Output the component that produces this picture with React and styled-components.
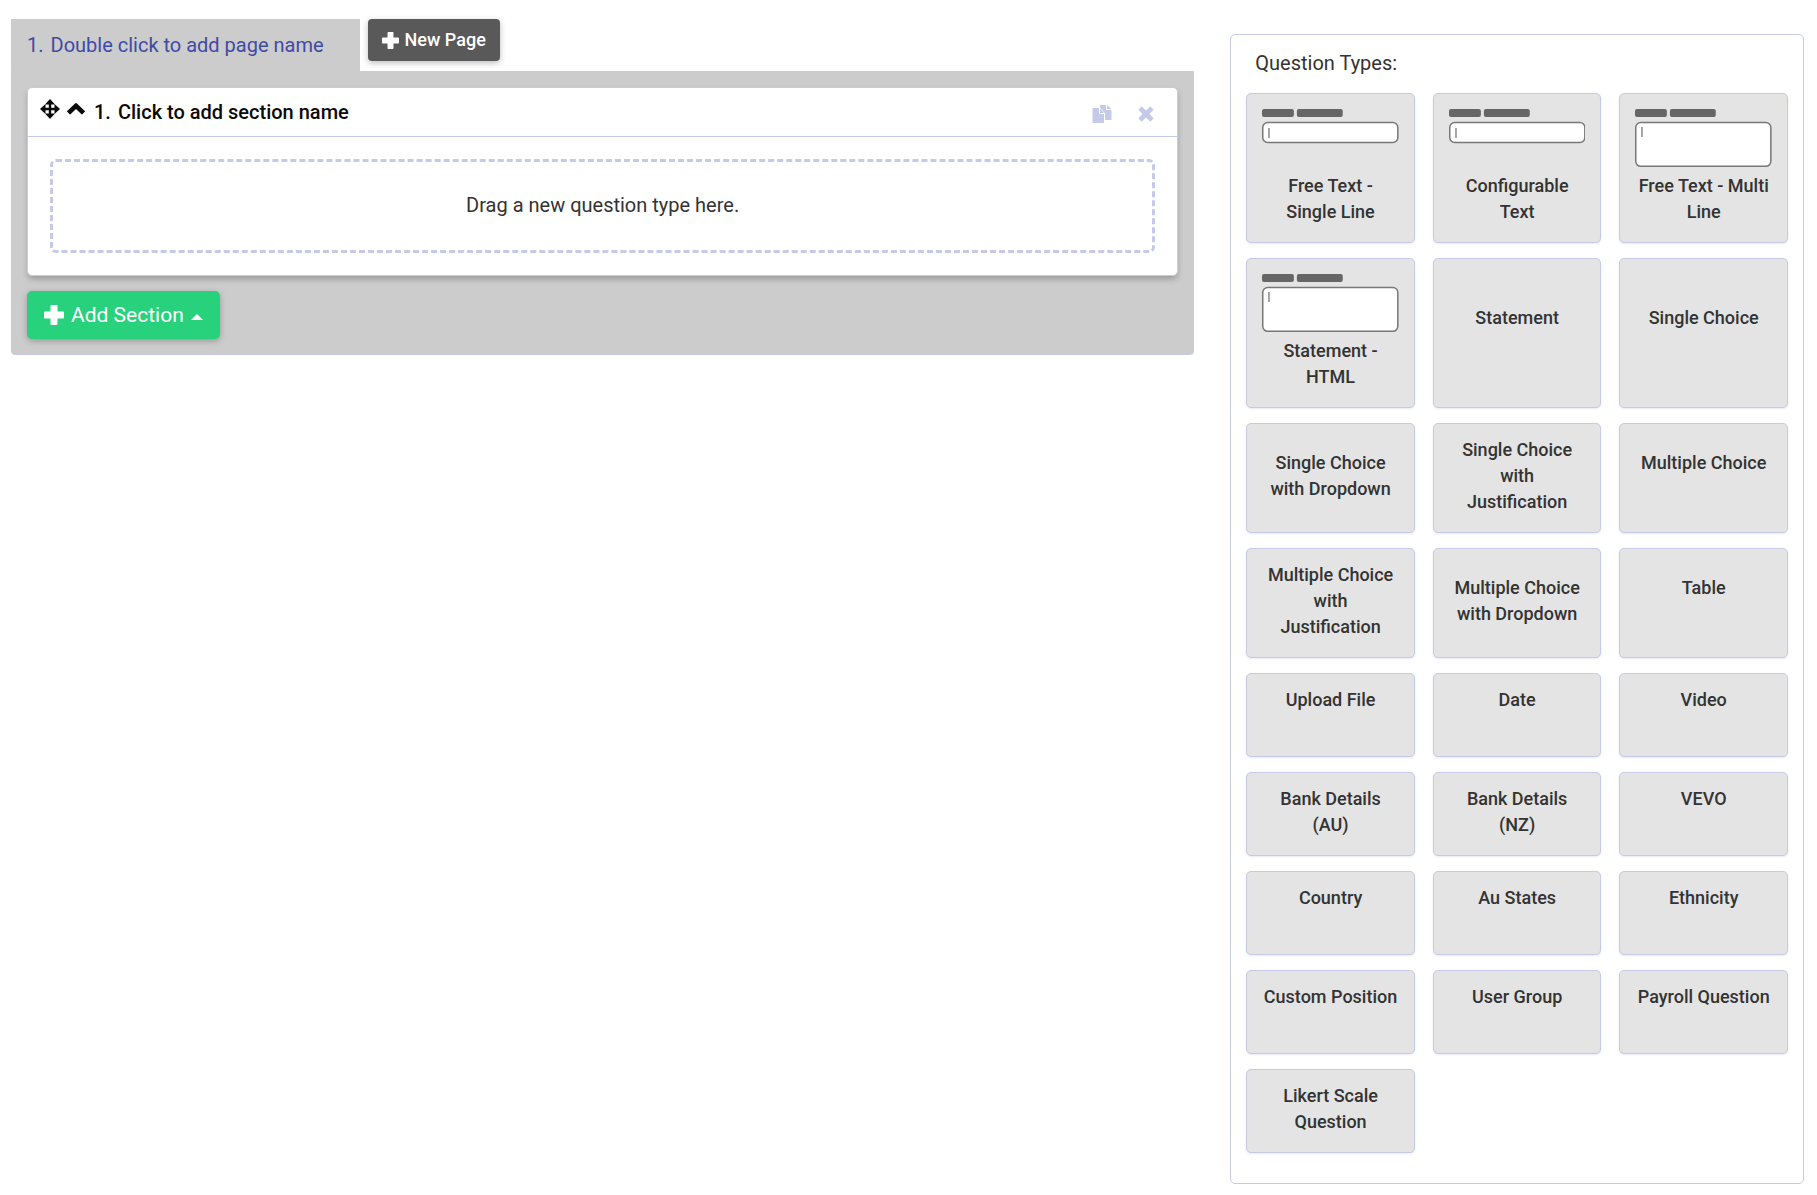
import React from "react";
import styled, { createGlobalStyle } from "styled-components";

const GlobalStyle = createGlobalStyle`
  *, *::before, *::after { box-sizing: border-box; }
  body {
    margin: 0;
    background: #fff;
    color: #333;
    font-family: Roboto, "Liberation Sans", sans-serif;
    font-size: 20px;
    font-weight: 400;
    line-height: 28px;
  }
  button { font: inherit; color: inherit; cursor: pointer; }
`;

const Page = styled.div`
  display: grid;
  grid-template-columns: 33fr 16fr;
  gap: 36px;
  align-items: start;
  padding: 19px 13px 10px 11px;
`;

const TabBar = styled.nav`
  display: flex;
  align-items: flex-start;
  gap: 8px;
`;

const TabSlot = styled.div`
  background: #ccc;
  padding-right: 2px;
`;

const Tab = styled.a`
  display: flex;
  gap: 7px;
  height: 52px;
  padding: 11px 33px 12px 15px;
  border: 1px solid #c5cae9;
  border-bottom: 0;
  border-top-right-radius: 4px;
  color: #3f4ba5;
  text-decoration: none;
  white-space: nowrap;
`;

const SolidButton = styled.button`
  display: inline-flex;
  align-items: center;
  gap: ${(p) => (p.$large ? "7px" : "6px")};
  height: ${(p) => (p.$large ? "48px" : "42px")};
  padding: 0 ${(p) => (p.$large ? "17px" : "14px")};
  border: 0;
  border-radius: ${(p) => (p.$large ? "5px" : "4px")};
  background: ${(p) => (p.$large ? "#28d17c" : "#595959")};
  color: #fff;
  font-size: ${(p) => (p.$large ? "21px" : "18px")};
  font-weight: ${(p) => (p.$large ? 400 : 500)};
  white-space: nowrap;
  box-shadow: 0 2px 6px rgba(0, 0, 0, 0.26);
`;

const Workspace = styled.div`
  padding: 15px;
  border: 1px solid #c5cae9;
  border-radius: 0 0 4px 4px;
  background: #ccc;
`;

const Section = styled.section`
  margin-bottom: 15px;
  border: 1px solid #c5cae9;
  border-radius: 5px;
  background: #fff;
  box-shadow: 0 4px 6px -1px rgba(0, 0, 0, 0.25);
`;

const SectionHeader = styled.header`
  display: flex;
  align-items: center;
  height: 49px;
  padding: 0 23px 0 12px;
  border-bottom: 1px solid #c5cae9;
  color: #0a0a0a;
`;

const SectionTitle = styled.h2`
  display: flex;
  flex: 1;
  gap: 7px;
  margin: 0 0 0 9px;
  font-size: 20px;
  font-weight: 500;
`;

const PlainButton = styled.button`
  display: flex;
  padding: 0;
  border: 0;
  background: none;
`;

const Tools = styled.div`
  display: flex;
  align-items: center;
  gap: ${(p) => (p.$wide ? "26px" : "7px")};
  padding: ${(p) => (p.$wide ? "3px 0 0" : "0 0 6px")};
  color: ${(p) => (p.$wide ? "#c5cae9" : "inherit")};
`;

const DropZone = styled.div`
  display: flex;
  align-items: center;
  justify-content: center;
  height: 94px;
  margin: 22px;
  padding-bottom: 2px;
  border: 3px dashed #c5cae9;
  border-radius: 6px;
`;

const Sidebar = styled.aside`
  margin-top: 15px;
  padding: 14px 15px 30px;
  border: 1px solid #c5cae9;
  border-radius: 5px;
`;

const SidebarTitle = styled.h3`
  margin: 0 9px 16px;
  font-size: 20px;
  font-weight: 400;
`;

const TypeGrid = styled.ul`
  display: grid;
  grid-template-columns: repeat(3, 1fr);
  gap: 15px 18px;
  margin: 0;
  padding: 0;
  list-style: none;
`;

const TypeItem = styled.li`
  display: flex;
`;

const TypeCard = styled.button`
  display: flex;
  flex: 1;
  flex-direction: column;
  align-items: stretch;
  justify-content: center;
  min-width: 0;
  padding: 13px 15px 17px;
  border: 1px solid #c5cae9;
  border-radius: 5px;
  background: #e4e4e4;
  font-size: 18px;
  font-weight: 500;
  line-height: 26px;
  text-align: center;
  box-shadow: 0 1px 2px rgba(197, 202, 233, 0.4);
`;

const TypeLabel = styled.span`
  min-height: 52px;
`;

const Preview = styled.svg`
  display: block;
  width: 100%;
  height: 64px;
  margin-top: 2px;
`;

const Plus = ({ size }) => (
  <svg width={size} height={size} viewBox="0 0 20 20" aria-hidden="true">
    <path fill="currentColor" d="M7.4 0h5.2q.9 0 .9.9v5.6h5.6q.9 0 .9.9v5.2q0 .9-.9.9h-5.6v5.6q0 .9-.9.9H7.4q-.9 0-.9-.9v-5.6H.9q-.9 0-.9-.9V7.4q0-.9.9-.9h5.6V.9q0-.9.9-.9z" />
  </svg>
);

const MoveIcon = () => (
  <svg width="20" height="20" viewBox="0 0 20 20" aria-hidden="true">
    <path fill="currentColor" d="M10 0l5 5.500h-3.800v3.300h3.300V5L20 10l-5.500 5v-3.800h-3.300v3.300H15L10 20l-5-5.500h3.800v-3.300H5.500V15L0 10l5.500-5v3.800h3.300V5.500H5z" />
  </svg>
);

const ChevronIcon = () => (
  <svg width="18" height="20" viewBox="0 0 18 20" aria-hidden="true">
    <path fill="currentColor" d="M8.300 4.300q.7-.6 1.400 0L17.800 12q.4.400 0 .8l-2.500 2.400q-.4.4-.8 0L9 10l-5.500 5.200q-.4.4-.8 0L.2 12.800q-.4-.4 0-.8z" />
  </svg>
);

const CopyIcon = () => (
  <svg width="20" height="20" viewBox="0 0 20 20" aria-hidden="true">
    <path fill="currentColor" d="M8 1h6v5h5.500v10h-6.500V9.500L8 3.500zM15 1l4.500 4H15z" />
    <path fill="currentColor" d="M.5 4H7v6h5v9H.5zM8 4.500L12 9H8z" />
  </svg>
);

const RemoveIcon = () => (
  <svg width="16" height="16" viewBox="0 0 16 16" aria-hidden="true">
    <path fill="currentColor" d="M3.200.8q.5-.4 1 0L8 4.500 11.800.8q.5-.4 1 0l2.400 2.400q.4.500 0 1L11.500 8l3.700 3.800q.4.500 0 1l-2.400 2.400q-.5.4-1 0L8 11.500l-3.800 3.700q-.5.4-1 0L.8 12.800q-.4-.5 0-1L4.500 8 .8 4.200q-.4-.5 0-1z" />
  </svg>
);

const CaretUp = () => (
  <svg width="12" height="12" viewBox="0 0 12 12" aria-hidden="true">
    <path fill="currentColor" d="M6 5l6 6H0z" />
  </svg>
);

const FieldPreview = ({ rows }) => (
  <Preview viewBox="0 0 137 64" preserveAspectRatio="xMinYMin meet" aria-hidden="true">
    <rect x="0" y="0" width="32" height="8" rx="2" fill="#666" />
    <rect x="35" y="0" width="46" height="8" rx="2" fill="#666" />
    <rect x="0.750" y="13.500" width="135.500" height={rows > 1 ? 44 : 20} rx="5" fill="#fff" stroke="#777" strokeWidth="1.500" />
    <path d={rows > 1 ? "M7 18v10" : "M7 19v10"} stroke="#888" strokeWidth="1.500" />
  </Preview>
);

const questionTypes = [
  { label: "Free Text - Single Line", rows: 1 },
  { label: "Configurable Text", rows: 1 },
  { label: "Free Text - Multi Line", rows: 2 },
  { label: "Statement - HTML", rows: 2 },
  { label: "Statement" },
  { label: "Single Choice" },
  { label: "Single Choice with Dropdown" },
  { label: "Single Choice with Justification" },
  { label: "Multiple Choice" },
  { label: "Multiple Choice with Justification" },
  { label: "Multiple Choice with Dropdown" },
  { label: "Table" },
  { label: "Upload File" },
  { label: "Date" },
  { label: "Video" },
  { label: "Bank Details (AU)" },
  { label: "Bank Details (NZ)" },
  { label: "VEVO" },
  { label: "Country" },
  { label: "Au States" },
  { label: "Ethnicity" },
  { label: "Custom Position" },
  { label: "User Group" },
  { label: "Payroll Question" },
  { label: "Likert Scale Question" },
];

export default function App() {
  return (
    <>
      <GlobalStyle />
      <Page>
        <main>
          <TabBar>
            <TabSlot>
              <Tab href="#page-1">
                <span>1.</span>
                <span>Double click to add page name</span>
              </Tab>
            </TabSlot>
            <SolidButton type="button">
              <Plus size={17} />
              New Page
            </SolidButton>
          </TabBar>
          <Workspace id="page-1">
            <Section>
              <SectionHeader>
                <Tools>
                  <PlainButton type="button" aria-label="Move section">
                    <MoveIcon />
                  </PlainButton>
                  <PlainButton type="button" aria-label="Collapse section">
                    <ChevronIcon />
                  </PlainButton>
                </Tools>
                <SectionTitle>
                  <span>1.</span>
                  <PlainButton type="button">Click to add section name</PlainButton>
                </SectionTitle>
                <Tools $wide>
                  <PlainButton type="button" aria-label="Duplicate section">
                    <CopyIcon />
                  </PlainButton>
                  <PlainButton type="button" aria-label="Remove section">
                    <RemoveIcon />
                  </PlainButton>
                </Tools>
              </SectionHeader>
              <DropZone>Drag a new question type here.</DropZone>
            </Section>
            <SolidButton type="button" $large>
              <Plus size={20} />
              Add Section
              <CaretUp />
            </SolidButton>
          </Workspace>
        </main>
        <Sidebar>
          <SidebarTitle>Question Types:</SidebarTitle>
          <TypeGrid>
            {questionTypes.map((type) => (
              <TypeItem key={type.label}>
                <TypeCard type="button">
                  {type.rows && <FieldPreview rows={type.rows} />}
                  <TypeLabel>{type.label}</TypeLabel>
                </TypeCard>
              </TypeItem>
            ))}
          </TypeGrid>
        </Sidebar>
      </Page>
    </>
  );
}
